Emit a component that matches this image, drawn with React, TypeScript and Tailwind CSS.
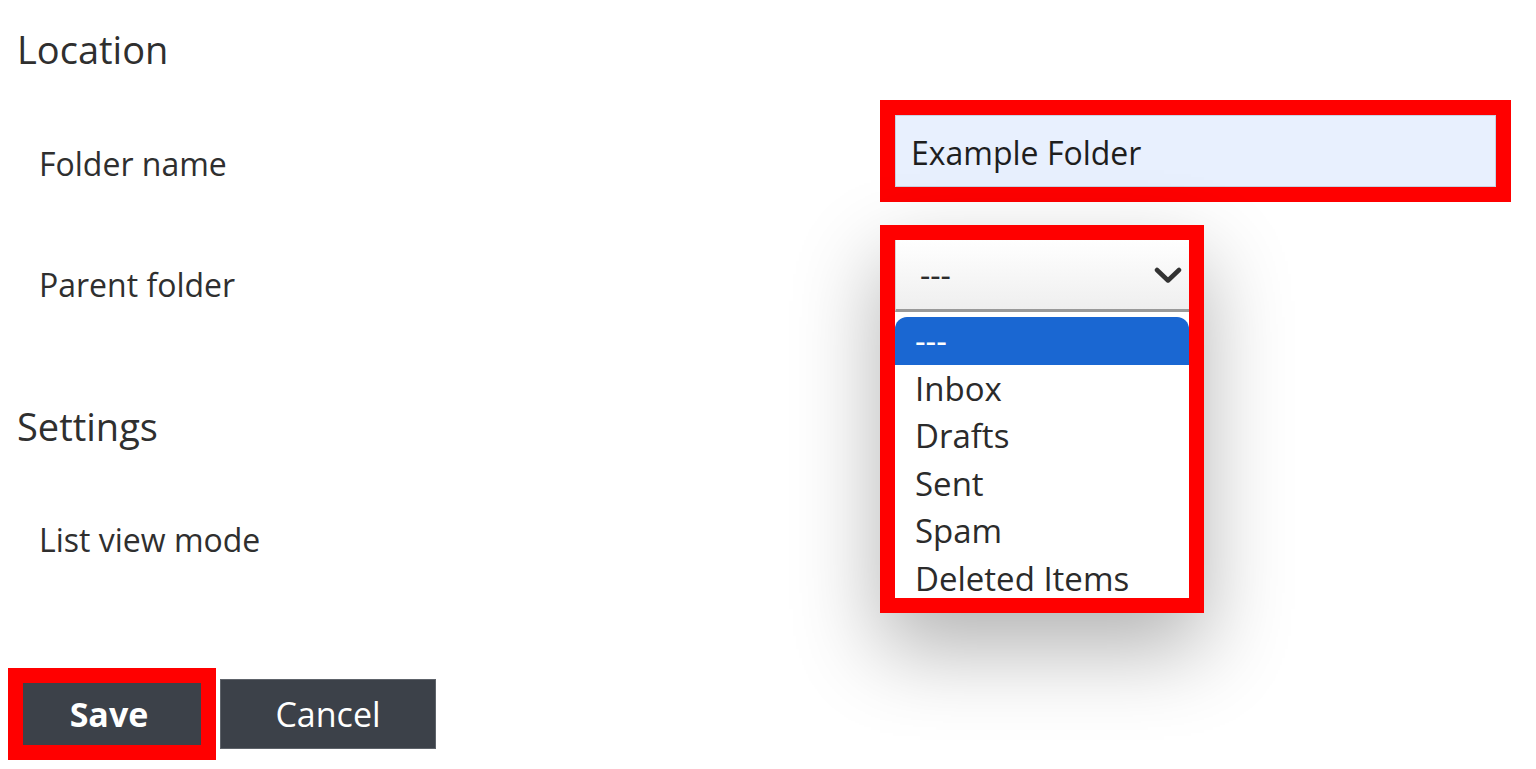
import React from "react";

const folders = ["---", "Inbox", "Drafts", "Sent", "Spam", "Deleted Items"];

function Chevron() {
  return (
    <svg width="28" height="18" viewBox="0 0 28 18" fill="none" aria-hidden="true">
      <polyline
        points="3,4 14,14.5 25,4"
        stroke="#333"
        strokeWidth="4.5"
        strokeLinecap="round"
        strokeLinejoin="round"
      />
    </svg>
  );
}

function ParentFolderSelect() {
  return (
    <div className="relative h-[88px] w-[324px]">
      <div className="absolute left-0 top-0 z-10 w-[324px] border-[15px] border-[#ff0000] bg-white shadow-[0_36px_80px_rgba(0,0,0,0.3)]">
        <div className="flex h-[72px] items-center justify-between border-b-[3px] border-l border-b-[#9a9a9a] border-l-[#d6d6d6] bg-linear-to-b from-white to-[#efefef] pl-[24px] pr-[7px]">
          <span className="text-[32px] leading-none text-[#2b2b2b]">---</span>
          <Chevron />
        </div>
        <ul className="mt-px h-[285px] overflow-hidden rounded-[12px] bg-white pt-[4px]">
          {folders.map((f, i) => (
            <li
              key={f}
              className={`h-[47.6px] pl-[20px] text-[33px] leading-[47.6px] ${
                i === 0 ? "rounded-t-[12px] bg-[#1a67d2] text-white" : "text-[#2b2b2b]"
              }`}
            >
              {f}
            </li>
          ))}
        </ul>
      </div>
    </div>
  );
}

export default function App() {
  return (
    <div
      className="min-h-screen bg-white pt-[24px] text-[#2f2f2f]"
      style={{ fontFamily: '"Open Sans", "Noto Sans", sans-serif' }}
    >
      <h2 className="pl-[17px] text-[38px] font-normal leading-[50px]">Location</h2>

      <div className="mt-[26px] flex items-start">
        <label className="w-[880px] shrink-0 pl-[39px] pt-[42px] text-[32px] leading-[44px]">
          Folder name
        </label>
        <div className="h-[102px] w-[631px] border-[15px] border-[#ff0000]">
          <div className="flex h-full items-center border border-[#c8d2e2] bg-[#e8f0fe] pl-[15px] pt-[3px] text-[32px] text-[#1e1e1e]">
            Example Folder
          </div>
        </div>
      </div>

      <div className="mt-[23px] flex items-start">
        <label className="w-[880px] shrink-0 pl-[39px] pt-[38px] text-[32px] leading-[44px]">
          Parent folder
        </label>
        <ParentFolderSelect />
      </div>

      <h2 className="mt-[88px] pl-[17px] text-[38px] font-normal leading-[50px]">Settings</h2>

      <div className="mt-[67px] flex items-start">
        <label className="w-[880px] shrink-0 pl-[39px] text-[32px] leading-[44px]">
          List view mode
        </label>
      </div>

      <div className="mt-[106px] flex items-center gap-[4px] pl-[8px]">
        <div className="border-[15px] border-[#ff0000]">
          <button className="flex h-[62px] w-[178px] items-center justify-center bg-[#3c4149] pr-[6px] text-[34px] font-bold text-white">
            Save
          </button>
        </div>
        <button className="flex h-[70px] w-[216px] items-center justify-center border border-[#5e636a] bg-[#3c4149] text-[34px] text-white">
          Cancel
        </button>
      </div>
    </div>
  );
}
